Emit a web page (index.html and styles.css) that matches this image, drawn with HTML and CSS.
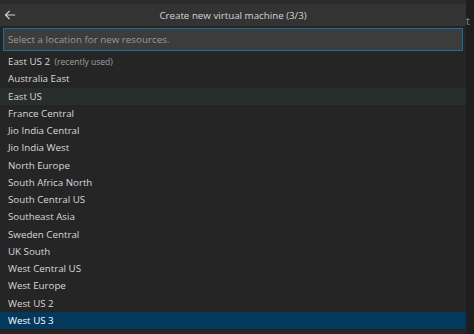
FILE: index.html
```html
<!DOCTYPE html>
<html>
<head>
<title>Create new virtual machine</title>
<meta name="viewport" content="width=device-width, initial-scale=1">
<link rel="stylesheet" href="styles.css">
</head>
<body>

<div class="screen">
	<div class="quickpick">
		<div class="titlebar">
			<span class="back">
				<svg width="12" height="12" viewBox="0 0 16 16"><path d="M7.5 2.5 2 8l5.5 5.5M2.4 8H15" fill="none" stroke="#d0d0d0" stroke-width="1.6"/></svg>
			</span>
			<span class="title">Create new virtual machine (3/3)</span>
		</div>
		<div class="inputrow">
			<div class="input">Select a location for new resources.</div>
		</div>
		<ul class="list">
			<li>East US 2 <span class="desc">(recently used)</span></li>
			<li>Australia East</li>
			<li class="hover">East US</li>
			<li>France Central</li>
			<li>Jio India Central</li>
			<li>Jio India West</li>
			<li>North Europe</li>
			<li>South Africa North</li>
			<li>South Central US</li>
			<li>Southeast Asia</li>
			<li>Sweden Central</li>
			<li>UK South</li>
			<li>West Central US</li>
			<li>West Europe</li>
			<li>West US 2</li>
			<li class="selected">West US 3</li>
		</ul>
	</div>
	<div class="behind"><span>t</span></div>
</div>

</body>
</html>
```

FILE: styles.css
```css
html, body {
	margin: 0;
	padding: 0;
	background: #1e1e1e;
	font-family: "Open Sans", "Noto Sans", sans-serif;
	font-size: 9.75px;
}

.screen {
	display: flex;
	width: 474px;
	height: 334px;
	overflow: hidden;
}

.quickpick {
	width: 466px;
	background: #252526;
	border-top: 4px solid #2b2b2b;
	display: flex;
	flex-direction: column;
}

.titlebar {
	position: relative;
	height: 22px;
	background: #333334;
	display: flex;
	align-items: center;
	justify-content: center;
	color: #d4d4d4;
}
.back {
	position: absolute;
	left: 4px;
	top: 5px;
	display: flex;
}

.inputrow {
	padding: 2px 3px 2px 3px;
	background: #252526;
}
.input {
	box-sizing: border-box;
	height: 23px;
	border: 1px solid #1b6e99;
	background: #3c3c3c;
	color: #9a9a9a;
	padding: 0 4px;
	line-height: 21px;
	font-size: 9.8px;
}

.list {
	list-style: none;
	margin: 0;
	padding: 0;
}
.list li {
	height: 17.25px;
	line-height: 17.25px;
	padding-left: 8px;
	color: #d8d8d8;
	white-space: nowrap;
}
.list li.hover {
	background: #2a2d2e;
}
.list li.selected {
	background: #04395e;
	color: #ffffff;
}
.desc {
	font-size: 8.5px;
	color: #a0a0a0;
	margin-left: 2px;
}

.behind {
	flex: 1;
	background: #1e1e1e;
	color: #888;
	font-size: 11px;
	padding-top: 13px;
}
```
